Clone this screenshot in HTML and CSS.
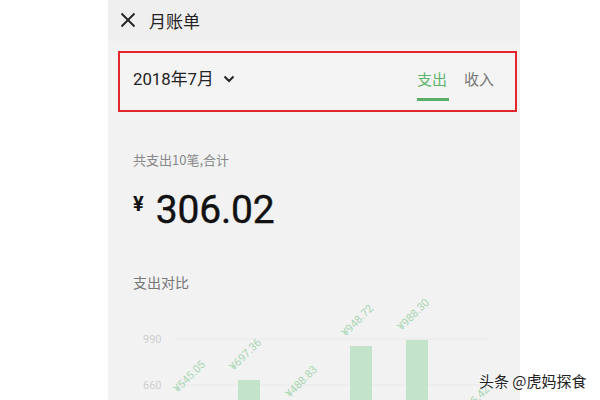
FILE: index.html
```html
<!DOCTYPE html>
<html>
<head>
<meta charset="utf-8">
<link rel="stylesheet" href="styles.css">
</head>
<body>
<div class="panel">
  <div class="topbar">
    <svg class="close" width="16" height="16" viewBox="0 0 16 16"><path d="M1.5 1.5 L14.5 14.5 M14.5 1.5 L1.5 14.5" stroke="#222" stroke-width="1.8" fill="none"/></svg>
    <span class="title">月账单</span>
  </div>
  <div class="filter">
    <div class="month">2018年7月
      <svg class="chev" width="12" height="8" viewBox="0 0 12 8"><path d="M1.5 1.5 L6 6 L10.5 1.5" stroke="#222" stroke-width="2" fill="none"/></svg>
    </div>
    <div class="tabs">
      <span class="tab active">支出</span>
      <span class="tab">收入</span>
    </div>
  </div>
  <div class="summary">
    <div class="count">共支出10笔,合计</div>
    <div class="amount"><span class="yen">¥</span><span class="num">306.02</span></div>
  </div>
  <div class="compare">
    <div class="ctitle">支出对比</div>
    <svg class="chart" width="412" height="110" viewBox="108 290 412 110">
      <g class="axis">
        <text x="143" y="343">990</text>
        <text x="143" y="389">660</text>
      </g>
      <line x1="176" y1="339" x2="487" y2="339" class="grid"/>
      <line x1="176" y1="385" x2="487" y2="385" class="grid"/>
      <g class="bars">
        <rect x="182" y="401" width="22" height="80"/>
        <rect x="238" y="380" width="22" height="80"/>
        <rect x="294" y="409" width="22" height="80"/>
        <rect x="350" y="346" width="22" height="80"/>
        <rect x="406" y="340" width="22" height="80"/>
        <rect x="462" y="430" width="22" height="80"/>
      </g>
      <g class="vals">
        <text transform="translate(178 393) rotate(-45)">¥545.05</text>
        <text transform="translate(234 371) rotate(-45)">¥697.36</text>
        <text transform="translate(290 398) rotate(-45)">¥488.83</text>
        <text transform="translate(346 337) rotate(-45)">¥948.72</text>
        <text transform="translate(402 331) rotate(-45)">¥988.30</text>
        <text transform="translate(462 418) rotate(-45)">¥325.42</text>
      </g>
    </svg>
  </div>
</div>
<div class="watermark">头条 @虎妈探食</div>
</body>
</html>
```
FILE: styles.css
```css
html, body {
  margin: 0;
  padding: 0;
  background: #ffffff;
  width: 600px;
  height: 400px;
  overflow: hidden;
  font-family: Roboto, "Noto Sans CJK SC", sans-serif;
}
.panel {
  margin-left: 108px;
  width: 412px;
  height: 400px;
  background: #f2f2f2;
  display: flex;
  flex-direction: column;
}
.topbar {
  height: 41px;
  display: flex;
  align-items: center;
  padding-left: 12px;
  background: #efefef;
}
.close {
  display: block;
  margin-top: -1px;
}
.title {
  margin-left: 13px;
  font-family: "Noto Sans CJK SC", sans-serif;
  font-size: 17px;
  color: #222;
}
.filter {
  margin: 10px 0 0 10px;
  width: 395px;
  height: 57px;
  border: 2px solid #e3262b;
  background: #f4f4f4;
  display: flex;
  align-items: center;
  justify-content: space-between;
}
.month {
  margin-left: 13px;
  margin-top: -6px;
  font-family: Roboto, "Noto Sans CJK SC", sans-serif;
  font-size: 16.8px;
  color: #222;
  display: flex;
  align-items: center;
}
.chev {
  margin-left: 9px;
  margin-top: 1px;
}
.tabs {
  display: flex;
  gap: 17px;
  margin-right: 21px;
  margin-top: -6px;
}
.tab {
  font-family: "Noto Sans CJK SC", sans-serif;
  font-size: 15px;
  color: #777;
  position: relative;
}
.tab.active {
  color: #5cb46c;
}
.tab.active::after {
  content: "";
  position: absolute;
  left: 0;
  right: -2px;
  top: 30px;
  height: 3px;
  background: #5aae67;
}
.summary {
  padding: 38px 0 0 25px;
  height: 118px;
}
.count {
  font-family: "Noto Sans CJK SC", sans-serif;
  font-size: 13px;
  color: #888;
  line-height: 20px;
}
.amount {
  margin-top: 20px;
  display: flex;
  align-items: baseline;
  color: #111;
}
.yen {
  font-family: Roboto, sans-serif;
  font-weight: 700;
  font-size: 20px;
  margin-right: 12px;
  position: relative;
  top: -12px;
}
.num {
  font-family: Roboto, sans-serif;
  font-weight: 400;
  font-size: 39px;
  line-height: 40px;
  letter-spacing: -0.2px;
  -webkit-text-stroke: 0.4px #111;
}
.compare {
  padding-left: 25px;
  margin-top: 5px;
}
.ctitle {
  font-family: "Noto Sans CJK SC", sans-serif;
  font-size: 14px;
  color: #777;
  line-height: 20px;
}
.chart {
  display: block;
  margin-left: -25px;
  margin-top: -2px;
}
.axis text {
  font-family: Roboto, sans-serif;
  font-size: 11px;
  fill: #cfcfcf;
}
.grid {
  stroke: #e9e9e9;
  stroke-width: 1;
}
.bars rect {
  fill: #c4e3cb;
}
.vals text {
  font-family: Roboto, sans-serif;
  font-size: 11px;
  fill: #a9d7b4;
}
.watermark {
  position: absolute;
  left: 479px;
  top: 370px;
  font-family: "Noto Sans CJK SC", sans-serif;
  font-size: 15px;
  color: #222;
  text-shadow: 0 0 2px #fff, 0 0 2px #fff;
}
```
